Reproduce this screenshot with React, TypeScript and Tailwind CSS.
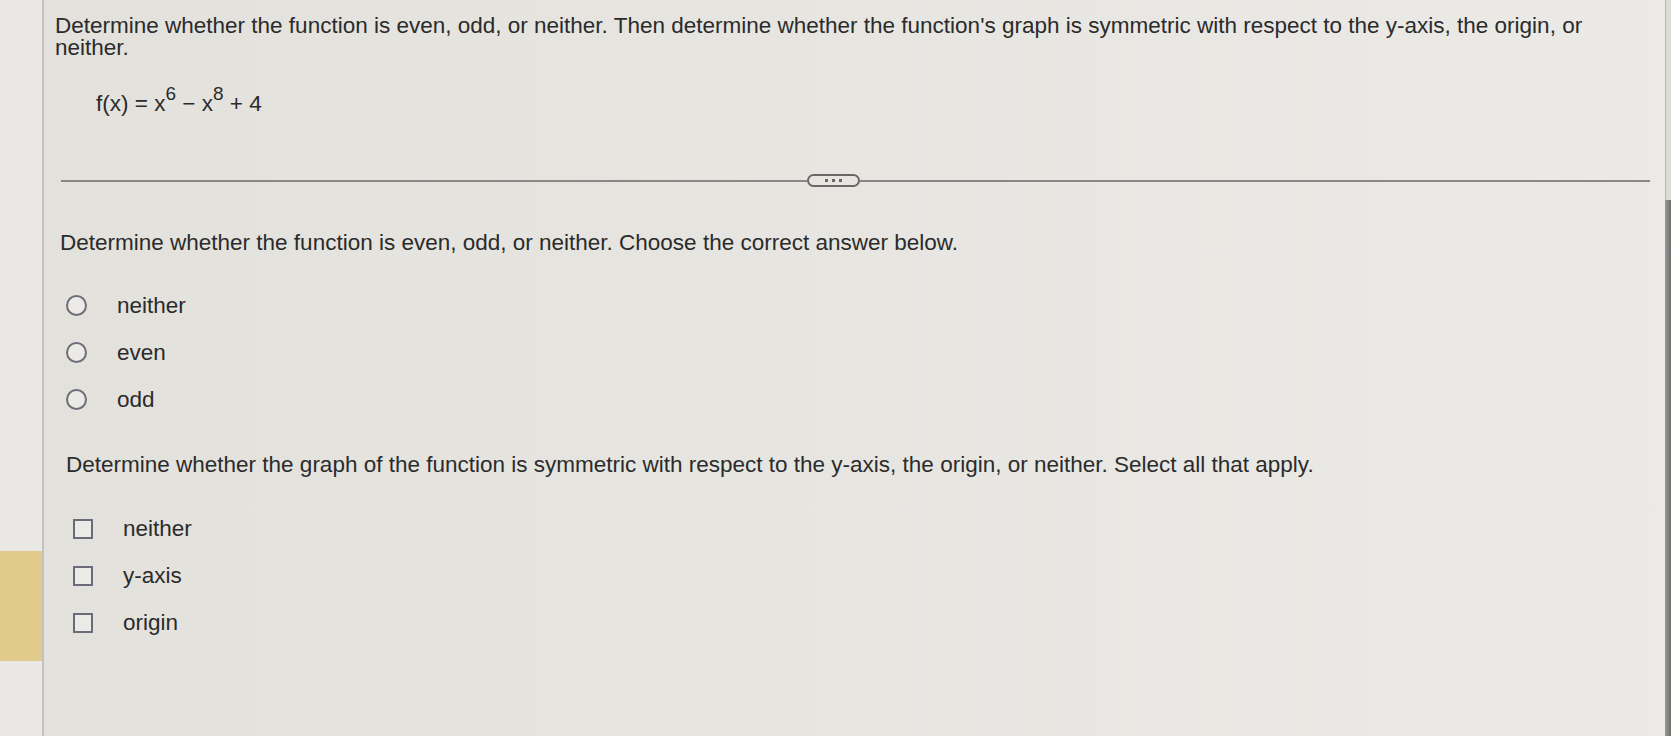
const evenOdd = ["neither", "even", "odd"];
const symmetry = ["neither", "y-axis", "origin"];

export default function App() {
  return (
    <div className="flex h-[736px] w-[1671px] overflow-hidden bg-gradient-to-r from-[#e3e1dc] to-[#ebeae6] font-['Liberation_Sans',Arial,sans-serif] text-[22.5px] text-[#2b2b2b]">
      {/* left gutter */}
      <div className="flex w-[42px] shrink-0 flex-col bg-[#e9e8e4]">
        <div className="h-[551px]" />
        <div className="h-[110px] bg-[#e2c98c]" />
      </div>

      <div className="w-[2px] shrink-0 bg-[#c4c2bd]" />

      {/* main */}
      <div className="flex min-w-0 flex-1 flex-col pl-[11px] pr-[8px] pt-[15px]">
        <p className="w-[1580px] leading-[22px]">
          Determine whether the function is even, odd, or neither. Then determine whether the function's graph is symmetric with respect to the y-axis, the origin, or neither.
        </p>

        <div className="ml-[41px] mt-[31px] leading-[28px]">
          f(x) = x
          <span className="relative -top-[11px] text-[19px] leading-none">6</span>
          {" "}− x
          <span className="relative -top-[11px] text-[19px] leading-none">8</span>
          {" "}+ 4
        </div>

        {/* divider */}
        <div className="ml-[6px] mt-[56px] flex h-[13px] w-[1589px] items-center">
          <div className="h-[2px] w-[746px] bg-[#8a8884]" />
          <div className="flex h-[13px] w-[53px] items-center justify-center gap-[4px] rounded-full border-2 border-[#6a6864]">
            <span className="h-[3px] w-[3px] bg-[#6a6864]" />
            <span className="h-[3px] w-[3px] bg-[#6a6864]" />
            <span className="h-[3px] w-[3px] bg-[#6a6864]" />
          </div>
          <div className="h-[2px] flex-1 bg-[#8a8884]" />
        </div>

        <p className="ml-[5px] mt-[42px] leading-[28px]">
          Determine whether the function is even, odd, or neither. Choose the correct answer below.
        </p>

        <div className="mt-[25px] flex flex-col">
          {evenOdd.map((label) => (
            <div key={label} className="flex h-[47px] items-center">
              <span className="ml-[11px] h-[21px] w-[21px] rounded-full border-[2.5px] border-[#6e6d7a] bg-[#eceae6]" />
              <span className="ml-[30px]">{label}</span>
            </div>
          ))}
        </div>

        <p className="ml-[11px] mt-[28px] leading-[28px]">
          Determine whether the graph of the function is symmetric with respect to the y-axis, the origin, or neither. Select all that apply.
        </p>

        <div className="mt-[26px] flex flex-col">
          {symmetry.map((label) => (
            <div key={label} className="flex h-[47px] items-center">
              <span className="ml-[18px] h-[20px] w-[20px] border-2 border-[#6b6a78] bg-[#eceae6]" />
              <span className="ml-[30px]">{label}</span>
            </div>
          ))}
        </div>
      </div>

      {/* right screen edge */}
      <div className="flex w-[6px] shrink-0 flex-col">
        <div className="h-[200px] border-l border-[#b9b8b4] bg-[#dedcd8]" />
        <div className="flex-1 bg-gradient-to-r from-[#9a9996] to-[#6f6e6c]" />
      </div>
    </div>
  );
}
